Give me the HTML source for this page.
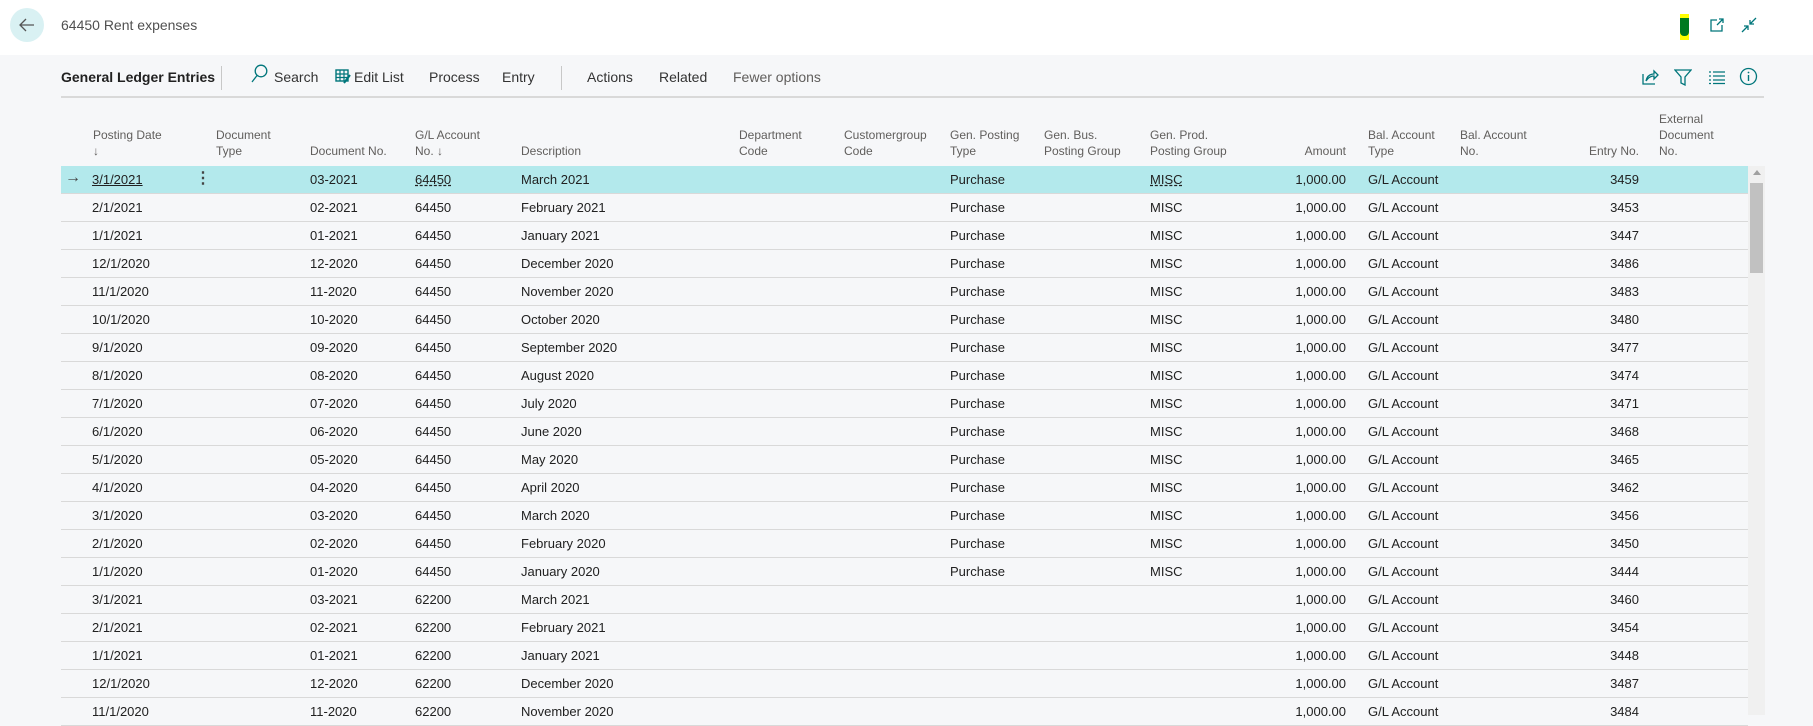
<!DOCTYPE html>
<html><head><meta charset="utf-8"><style>
*{margin:0;padding:0;box-sizing:border-box}
body{width:1813px;height:715px;overflow:hidden;background:#f6f7f9;font-family:"Liberation Sans",sans-serif;color:#212121;position:relative}
.top{position:absolute;left:0;top:0;width:1813px;height:55px;background:#fff}
.a{position:absolute;white-space:nowrap}
.tb{font-size:14px;color:#333;top:69px}
.hd{position:absolute;font-size:12px;color:#605e5c;line-height:16px;white-space:nowrap}
.row{position:absolute;left:61px;width:1687px;height:28px;border-bottom:1.5px solid #d9d9d9}
.row span{position:absolute;top:6px;font-size:13px;white-space:nowrap}
.r{text-align:right}
.hl{background:#b3e9ec}
svg{position:absolute}
</style></head><body>
<div class="top"></div>
<div class="a" style="left:10px;top:8px;width:34px;height:34px;border-radius:50%;background:#d9f1f3"></div>
<svg style="left:17px;top:15px" width="20" height="20" viewBox="0 0 20 20"><path d="M17 10H3M9 4L3 10L9 16" fill="none" stroke="#555" stroke-width="1.3"/></svg>
<div class="a" style="left:61px;top:17px;font-size:14px;color:#505050">64450 Rent expenses</div>
<div class="a" style="left:1680px;top:14px;width:9px;height:26px;background:#ffff00"></div>
<div class="a" style="left:1680px;top:18px;width:9px;height:18px;background:#007a1f;border-radius:0 0 4px 4px"></div>
<svg style="left:1708px;top:16px" width="18" height="18" viewBox="0 0 18 18"><path d="M9 4H3V15H14V9M11 3H15V7M15 3L9 9" fill="none" stroke="#00767b" stroke-width="1.3"/></svg>
<svg style="left:1740px;top:16px" width="18" height="18" viewBox="0 0 18 18"><path d="M16 2L10 8M10 4V8H14M2 16L8 10M4 10H8V14" fill="none" stroke="#00767b" stroke-width="1.3"/></svg>

<div class="a tb" style="left:61px;font-weight:bold;color:#212121">General Ledger Entries</div>
<div class="a" style="left:221px;top:66px;width:1px;height:24px;background:#c8c8c8"></div>
<svg style="left:250px;top:64px" width="18" height="20" viewBox="0 0 18 20"><circle cx="11" cy="7" r="5.8" fill="none" stroke="#00767b" stroke-width="1.3"/><path d="M7 11.5L2 18" stroke="#00767b" stroke-width="1.3"/></svg>
<div class="a tb" style="left:274px">Search</div>
<svg style="left:335px;top:68px" width="16" height="16" viewBox="0 0 16 16"><rect x="1" y="2" width="12" height="11" fill="none" stroke="#00767b" stroke-width="1.4"/><path d="M1 6H13M1 9.5H13M5 2V13M9 2V13" stroke="#00767b" stroke-width="1.2"/><path d="M9 15L15 7" stroke="#00767b" stroke-width="2"/></svg>
<div class="a tb" style="left:354px">Edit List</div>
<div class="a tb" style="left:429px">Process</div>
<div class="a tb" style="left:502px">Entry</div>
<div class="a" style="left:561px;top:66px;width:1px;height:24px;background:#c8c8c8"></div>
<div class="a tb" style="left:587px">Actions</div>
<div class="a tb" style="left:659px">Related</div>
<div class="a tb" style="left:733px;color:#605e5c">Fewer options</div>
<svg style="left:1641px;top:68px" width="18" height="18" viewBox="0 0 18 18"><path d="M2 6V16H14M5 13C6 8 9 6 13 6V3L17 7L13 11V8C10 8 7 10 5 13" fill="none" stroke="#00767b" stroke-width="1.3"/></svg>
<svg style="left:1674px;top:68px" width="18" height="18" viewBox="0 0 18 18"><path d="M1 2H17L11 9V17L7 15V9Z" fill="none" stroke="#00767b" stroke-width="1.3"/></svg>
<svg style="left:1708px;top:68px" width="18" height="18" viewBox="0 0 18 18"><path d="M1 4H3M5 4H17M1 8H3M5 8H17M1 12H3M5 12H17M1 15.5H3M5 15.5H17" stroke="#00767b" stroke-width="1.3"/></svg>
<svg style="left:1739px;top:67px" width="19" height="19" viewBox="0 0 19 19"><circle cx="9.5" cy="9.5" r="8" fill="none" stroke="#00767b" stroke-width="1.3"/><path d="M9.5 8V14" stroke="#00767b" stroke-width="1.4"/><circle cx="9.5" cy="5.5" r="0.9" fill="#00767b"/></svg>
<div class="a" style="left:61px;top:96px;width:1703px;height:1.5px;background:#d9d9d9"></div>

<div class="hd" style="left:93px;top:127px">Posting Date<br>↓</div>
<div class="hd" style="left:216px;top:127px">Document<br>Type</div>
<div class="hd" style="left:310px;top:143px">Document No.</div>
<div class="hd" style="left:415px;top:127px">G/L Account<br>No. ↓</div>
<div class="hd" style="left:521px;top:143px">Description</div>
<div class="hd" style="left:739px;top:127px">Department<br>Code</div>
<div class="hd" style="left:844px;top:127px">Customergroup<br>Code</div>
<div class="hd" style="left:950px;top:127px">Gen. Posting<br>Type</div>
<div class="hd" style="left:1044px;top:127px">Gen. Bus.<br>Posting Group</div>
<div class="hd" style="left:1150px;top:127px">Gen. Prod.<br>Posting Group</div>
<div class="hd" style="left:1246px;top:143px;width:100px;text-align:right">Amount</div>
<div class="hd" style="left:1368px;top:127px">Bal. Account<br>Type</div>
<div class="hd" style="left:1460px;top:127px">Bal. Account<br>No.</div>
<div class="hd" style="left:1539px;top:143px;width:100px;text-align:right">Entry No.</div>
<div class="hd" style="left:1659px;top:111px">External<br>Document<br>No.</div>

<div id="rows"></div>
<div class="a" style="left:1748px;top:166px;width:17px;height:549px;background:#f0f0f0"></div>
<div class="a" style="left:1753px;top:170px;width:0;height:0;border-left:4px solid transparent;border-right:4px solid transparent;border-bottom:5px solid #a0a0a0"></div>
<div class="a" style="left:1750px;top:183px;width:13px;height:90px;background:#c1c1c1"></div>
<script>
var d=[["3/1/2021","03-2021","64450","March 2021",1,"3459"],["2/1/2021","02-2021","64450","February 2021",1,"3453"],["1/1/2021","01-2021","64450","January 2021",1,"3447"],["12/1/2020","12-2020","64450","December 2020",1,"3486"],["11/1/2020","11-2020","64450","November 2020",1,"3483"],["10/1/2020","10-2020","64450","October 2020",1,"3480"],["9/1/2020","09-2020","64450","September 2020",1,"3477"],["8/1/2020","08-2020","64450","August 2020",1,"3474"],["7/1/2020","07-2020","64450","July 2020",1,"3471"],["6/1/2020","06-2020","64450","June 2020",1,"3468"],["5/1/2020","05-2020","64450","May 2020",1,"3465"],["4/1/2020","04-2020","64450","April 2020",1,"3462"],["3/1/2020","03-2020","64450","March 2020",1,"3456"],["2/1/2020","02-2020","64450","February 2020",1,"3450"],["1/1/2020","01-2020","64450","January 2020",1,"3444"],["3/1/2021","03-2021","62200","March 2021",0,"3460"],["2/1/2021","02-2021","62200","February 2021",0,"3454"],["1/1/2021","01-2021","62200","January 2021",0,"3448"],["12/1/2020","12-2020","62200","December 2020",0,"3487"],["11/1/2020","11-2020","62200","November 2020",0,"3484"]];
var h="";d.forEach(function(r,i){var t=166+28*i,f=i==0;
h+='<div class="row'+(f?' hl':'')+'" style="top:'+t+'px">'+
(f?'<span style="left:4px;top:3px;font-size:16px;color:#444">→</span><span style="left:134px;top:2px;font-size:16px;font-weight:bold;color:#444">⋮</span>':'')+
'<span style="left:31px;'+(f?'text-decoration:underline':'')+'">'+r[0]+'</span>'+
'<span style="left:249px">'+r[1]+'</span>'+
'<span style="left:354px;'+(f?'text-decoration:underline dashed':'')+'">'+r[2]+'</span>'+
'<span style="left:460px">'+r[3]+'</span>'+
(r[4]?'<span style="left:889px">Purchase</span><span style="left:1089px;'+(f?'text-decoration:underline dashed':'')+'">MISC</span>':'')+
'<span class="r" style="left:1185px;width:100px">1,000.00</span>'+
'<span style="left:1307px">G/L Account</span>'+
'<span class="r" style="left:1478px;width:100px">'+r[5]+'</span></div>';});
document.getElementById("rows").innerHTML=h;
</script>
</body></html>
